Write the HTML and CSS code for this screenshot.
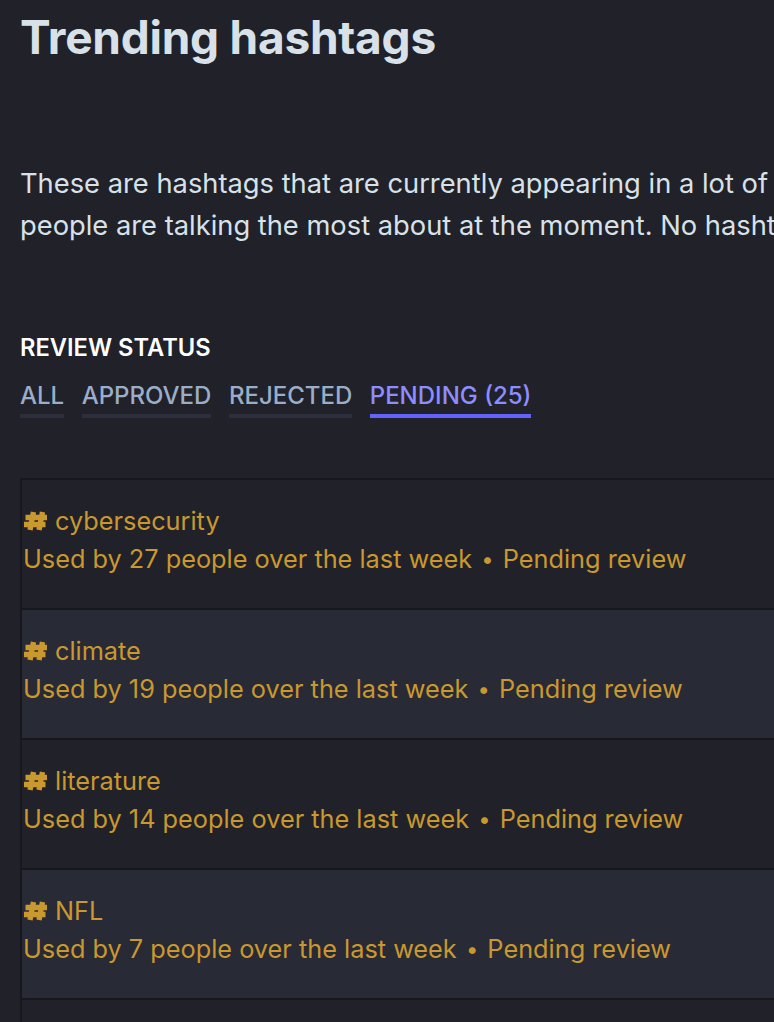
FILE: index.html
```html
<!DOCTYPE html>
<html lang="en">
<head>
<meta charset="utf-8">
<title>Trending hashtags</title>
<link rel="stylesheet" href="styles.css">
</head>
<body>
<main class="page">
  <h1 class="title">Trending hashtags</h1>
  <p class="lead">These are hashtags that are currently appearing in a lot of posts that your server sees. It can help your users find out what<br>people are talking the most about at the moment. No hashtags are displayed publicly until you approve them.</p>

  <section class="filter">
    <h2 class="filter-label">REVIEW STATUS</h2>
    <nav class="tabs">
      <a class="tab">ALL</a>
      <a class="tab">APPROVED</a>
      <a class="tab">REJECTED</a>
      <a class="tab active">PENDING (25)</a>
    </nav>
  </section>

  <div class="table">
    <div class="row">
      <div class="name"><svg class="hash" viewBox="0 0 25 20"><path d="M10.5 1 L7 19 M19.5 1 L16 19 M2.5 6.5 H24 M1 13.5 H22.5"/></svg>cybersecurity</div>
      <div class="meta">Used by 27 people over the last week <span class="dot">•</span> Pending review</div>
    </div>
    <div class="row">
      <div class="name"><svg class="hash" viewBox="0 0 25 20"><path d="M10.5 1 L7 19 M19.5 1 L16 19 M2.5 6.5 H24 M1 13.5 H22.5"/></svg>climate</div>
      <div class="meta">Used by 19 people over the last week <span class="dot">•</span> Pending review</div>
    </div>
    <div class="row">
      <div class="name"><svg class="hash" viewBox="0 0 25 20"><path d="M10.5 1 L7 19 M19.5 1 L16 19 M2.5 6.5 H24 M1 13.5 H22.5"/></svg>literature</div>
      <div class="meta">Used by 14 people over the last week <span class="dot">•</span> Pending review</div>
    </div>
    <div class="row">
      <div class="name"><svg class="hash" viewBox="0 0 25 20"><path d="M10.5 1 L7 19 M19.5 1 L16 19 M2.5 6.5 H24 M1 13.5 H22.5"/></svg>NFL</div>
      <div class="meta">Used by 7 people over the last week <span class="dot">•</span> Pending review</div>
    </div>
    <div class="row">
      <div class="name"><svg class="hash" viewBox="0 0 25 20"><path d="M10.5 1 L7 19 M19.5 1 L16 19 M2.5 6.5 H24 M1 13.5 H22.5"/></svg>books</div>
      <div class="meta">Used by 6 people over the last week <span class="dot">•</span> Pending review</div>
    </div>
  </div>
</main>
</body>
</html>
```

FILE: styles.css
```css
html, body {
  margin: 0;
  padding: 0;
  background: #202129;
  overflow: hidden;
}

body {
  font-family: Inter, "Noto Sans", "DejaVu Sans", sans-serif;
  color: #d9e1e8;
}

.page {
  padding: 9px 0 0 20px;
  width: 1400px;
}

.title {
  margin: 0;
  font-size: 46px;
  line-height: 56px;
  font-weight: 700;
  color: #d9e1e8;
  letter-spacing: -0.25px;
}

.lead {
  margin: 98px 0 0;
  font-size: 27.3px;
  line-height: 42px;
  white-space: nowrap;
  color: #d9e1e8;
}

.filter {
  margin-top: 86px;
}

.filter-label {
  margin: 0;
  font-size: 23.7px;
  line-height: 30px;
  font-weight: 600;
  color: #ffffff;
}

.tabs {
  display: flex;
  gap: 17.5px;
  margin-top: 18px;
}

.tab {
  font-size: 24px;
  line-height: 30px;
  font-weight: 500;
  color: #9baec8;
  padding-bottom: 3px;
  border-bottom: 4px solid #2c2f3b;
}

.tab.active {
  color: #8c8dff;
  border-bottom-color: #6364ff;
}

.table {
  margin-top: 60px;
  border-left: 2px solid #17181e;
}

.row {
  border-top: 2px solid #17181e;
  padding: 22px 0 30px 1px;
  color: #c9982f;
  font-size: 25.3px;
  line-height: 38px;
}

.row:nth-child(even) {
  background: #282a36;
}

.name {
  display: flex;
  align-items: center;
  gap: 7px;
}

.hash {
  width: 25px;
  height: 20px;
  flex: none;
}

.hash path {
  fill: none;
  stroke: #c9982f;
  stroke-width: 5.4;
}

.dot {
  font-size: 22px;
  line-height: 0;
  vertical-align: 1px;
  padding: 0 2px;
}
```
